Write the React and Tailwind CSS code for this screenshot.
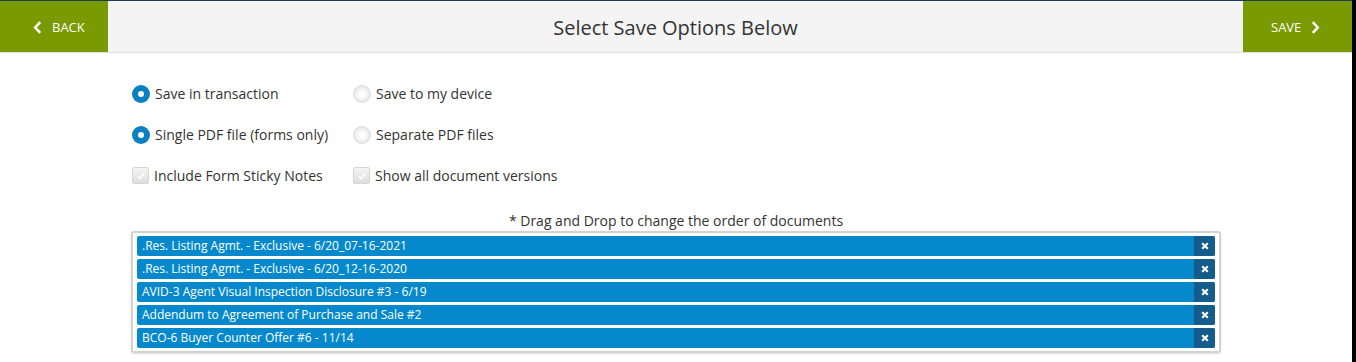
import { useState } from 'react';

const docs = [
  '.Res. Listing Agmt. - Exclusive - 6/20_07-16-2021',
  '.Res. Listing Agmt. - Exclusive - 6/20_12-16-2020',
  'AVID-3 Agent Visual Inspection Disclosure #3 - 6/19',
  'Addendum to Agreement of Purchase and Sale #2',
  'BCO-6 Buyer Counter Offer #6 - 11/14',
];

const Radio = ({ checked, label, onClick }) => (
  <button onClick={onClick} className="flex items-center gap-[5px] text-left">
    {checked ? (
      <span className="w-[18px] h-[18px] rounded-full bg-[#0a7fc2] flex items-center justify-center">
        <span className="w-[6px] h-[6px] rounded-full bg-white" />
      </span>
    ) : (
      <span className="w-[18px] h-[18px] rounded-full bg-[radial-gradient(circle,#ffffff_20%,#d9d9d9_100%)] border border-[#dcdcdc]" />
    )}
    <span>{label}</span>
  </button>
);

const Check = ({ label }) => (
  <label className="flex items-center gap-[5px]">
    <span className="w-[17px] h-[17px] rounded-[2px] border border-[#d6d6d6] bg-[linear-gradient(#f4f4f4,#dedede)] flex items-center justify-center">
      <svg viewBox="0 0 12 12" className="w-[10px] h-[10px]" fill="none" stroke="#ffffff" strokeWidth="2">
        <path d="M2 6.5l2.5 2.5L10 3" />
      </svg>
    </span>
    <span>{label}</span>
  </label>
);

export default function App() {
  const [dest, setDest] = useState('transaction');
  const [format, setFormat] = useState('single');

  return (
    <div className="w-[1356px] h-[362px] bg-white flex font-['Open_Sans',sans-serif] text-[#333] overflow-hidden">
      <div className="flex-1 flex flex-col">
        {/* Header */}
        <div className="h-[53px] border-t border-[#1d3a58] border-b border-b-[#dedede] bg-[#f4f4f4] flex">
          <button className="w-[108px] bg-[#7a9a01] text-white flex items-center gap-[10px] pl-[33px] pt-[2px] text-[13px]">
            <svg viewBox="0 0 10 16" className="w-[9px] h-[15px]" fill="none" stroke="#fff" strokeWidth="2.8">
              <path d="M8 2L2.5 8 8 14" />
            </svg>
            BACK
          </button>
          <div className="flex-1 flex items-center justify-center text-[20px] pt-[3px]">
            Select Save Options Below
          </div>
          <button className="w-[109px] bg-[#7a9a01] text-white flex items-center gap-[10px] pl-[28px] pt-[2px] text-[13px]">
            SAVE
            <svg viewBox="0 0 10 16" className="w-[9px] h-[15px]" fill="none" stroke="#fff" strokeWidth="2.8">
              <path d="M2 2l5.5 6L2 14" />
            </svg>
          </button>
        </div>

        {/* Options */}
        <div className="pl-[132px] pt-[20px] text-[14px]">
          <div className="grid grid-cols-[221px_1fr] auto-rows-[41px] items-center">
            <Radio checked={dest === 'transaction'} label="Save in transaction" onClick={() => setDest('transaction')} />
            <Radio checked={dest === 'device'} label="Save to my device" onClick={() => setDest('device')} />
            <Radio checked={format === 'single'} label="Single PDF file (forms only)" onClick={() => setFormat('single')} />
            <Radio checked={format === 'separate'} label="Separate PDF files" onClick={() => setFormat('separate')} />
            <Check label="Include Form Sticky Notes" />
            <Check label="Show all document versions" />
          </div>
        </div>

        <div className="text-[14px] text-center mt-[15px] leading-[20px]">* Drag and Drop to change the order of documents</div>

        {/* Document list */}
        <div className="ml-[131px] w-[1090px] border-[2px] border-[#d2d2d2] rounded-[3px] shadow-[0_1px_2px_rgba(0,0,0,0.15)] p-[3px] pl-[4px] pr-[4px] flex flex-col gap-[3px]">
          {docs.map((d) => (
            <div key={d} className="h-[20px] bg-[#0689cc] text-white text-[12px] rounded-[2px] flex items-center overflow-hidden">
              <span className="flex-1 pl-[5px]">{d}</span>
              <span className="w-[21px] h-full bg-[#135c8c] flex items-center justify-center">
                <svg viewBox="0 0 10 10" className="w-[8px] h-[8px]" stroke="#fff" strokeWidth="2.6">
                  <path d="M1.5 1.5l7 7M8.5 1.5l-7 7" />
                </svg>
              </span>
            </div>
          ))}
        </div>
      </div>
      <div className="w-[4px] bg-black" />
    </div>
  );
}
